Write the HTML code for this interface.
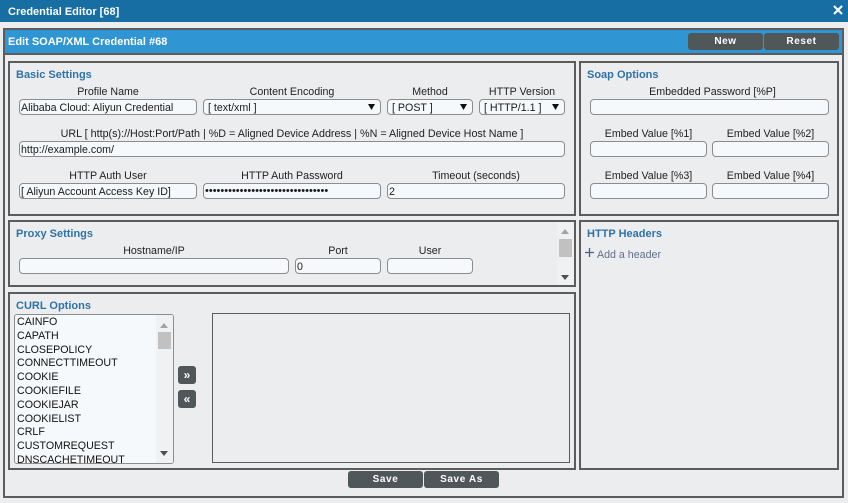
<!DOCTYPE html>
<html><head><meta charset="utf-8"><title>Credential Editor [68]</title>
<style>
html,body{margin:0;padding:0}
body{width:848px;height:503px;overflow:hidden;background:#ecedef;position:relative;font:10.67px/14px "Liberation Sans",sans-serif;color:#222}
div,svg{position:absolute;box-sizing:border-box}
.p{border:2px solid #5c5c5c}
.t{font-weight:bold;font-size:11px;color:#2f72a8;white-space:nowrap;margin-top:1px}
.l{text-align:center;white-space:nowrap;color:#222;margin-top:1px}
.i{background:#f6f9fb;border:1px solid #8c8c8c;border-radius:4px;height:16px;line-height:16px;padding-left:1px;white-space:nowrap;overflow:hidden;color:#1a1a1a}
.b{background:#4f5759;color:#fff;font-weight:bold;font-size:10px;letter-spacing:.6px;text-align:center;border-radius:3px;height:17px;line-height:18px;width:75px}
.o{left:2px;white-space:nowrap;color:#111;height:14px;line-height:14px}
</style></head><body>
<div style="left:0;top:0;width:848px;height:22px;background:#176ea3"></div>
<div style="left:8px;top:5px;color:#fff;font-weight:bold;font-size:11px;line-height:14px;white-space:nowrap">Credential Editor [68]</div>
<svg style="left:833px;top:5px" width="10" height="10" viewBox="0 0 10 10"><path d="M1 1L9 9M9 1L1 9" stroke="#fff" stroke-width="2" fill="none"/></svg>

<div class="p" style="left:3px;top:28px;width:841px;height:470px"></div>
<div style="left:5px;top:30px;width:837px;height:23px;background:#2f95d3"></div>
<div style="left:5px;top:53px;width:837px;height:2px;background:#5c5c5c"></div>
<div style="left:8px;top:35px;color:#fff;font-weight:bold;font-size:11px;white-space:nowrap">Edit SOAP/XML Credential #68</div>
<div class="b" style="left:688px;top:33px">New</div>
<div class="b" style="left:764px;top:33px">Reset</div>

<div class="p" style="left:8px;top:61px;width:568px;height:155px"></div>
<div class="t" style="left:16px;top:67px">Basic Settings</div>
<div class="l" style="left:19px;top:84px;width:178px">Profile Name</div>
<div class="i" style="left:19px;top:99px;width:178px">Alibaba Cloud: Aliyun Credential</div>
<div class="l" style="left:203px;top:84px;width:178px">Content Encoding</div>
<div class="i" style="left:203px;top:99px;width:178px;padding-left:4px">[ text/xml ]</div>
<svg style="left:368px;top:104px" width="8" height="6"><path d="M0 0H7L3.500 6Z" fill="#111"/></svg>
<div class="l" style="left:387px;top:84px;width:86px">Method</div>
<div class="i" style="left:387px;top:99px;width:86px;padding-left:4px">[ POST ]</div>
<svg style="left:460px;top:104px" width="8" height="6"><path d="M0 0H7L3.500 6Z" fill="#111"/></svg>
<div class="l" style="left:479px;top:84px;width:86px">HTTP Version</div>
<div class="i" style="left:479px;top:99px;width:86px;padding-left:4px">[ HTTP/1.1 ]</div>
<svg style="left:552px;top:104px" width="8" height="6"><path d="M0 0H7L3.500 6Z" fill="#111"/></svg>
<div class="l" style="left:19px;top:126px;width:546px;font-size:10.76px">URL [ http(s)://Host:Port/Path | %D = Aligned Device Address | %N = Aligned Device Host Name ]</div>
<div class="i" style="left:19px;top:141px;width:546px">http://example.com/</div>
<div class="l" style="left:19px;top:168px;width:178px">HTTP Auth User</div>
<div class="i" style="left:19px;top:183px;width:178px">[ Aliyun Account Access Key ID]</div>
<div class="l" style="left:203px;top:168px;width:178px">HTTP Auth Password</div>
<div class="i" style="left:203px;top:183px;width:178px;font-size:11px;line-height:14px">••••••••••••••••••••••••••••••••</div>
<div class="l" style="left:387px;top:168px;width:178px">Timeout (seconds)</div>
<div class="i" style="left:387px;top:183px;width:178px">2</div>

<div class="p" style="left:579px;top:61px;width:260px;height:155px"></div>
<div class="t" style="left:587px;top:67px">Soap Options</div>
<div class="l" style="left:590px;top:84px;width:245px">Embedded Password [%P]</div>
<div class="i" style="left:590px;top:99px;width:239px"></div>
<div class="l" style="left:590px;top:126px;width:117px">Embed Value [%1]</div>
<div class="i" style="left:590px;top:141px;width:117px"></div>
<div class="l" style="left:712px;top:126px;width:117px">Embed Value [%2]</div>
<div class="i" style="left:712px;top:141px;width:117px"></div>
<div class="l" style="left:590px;top:168px;width:117px">Embed Value [%3]</div>
<div class="i" style="left:590px;top:183px;width:117px"></div>
<div class="l" style="left:712px;top:168px;width:117px">Embed Value [%4]</div>
<div class="i" style="left:712px;top:183px;width:117px"></div>

<div class="p" style="left:8px;top:220px;width:568px;height:67px"></div>
<div class="t" style="left:16px;top:226px">Proxy Settings</div>
<div class="l" style="left:19px;top:243px;width:270px">Hostname/IP</div>
<div class="i" style="left:19px;top:258px;width:270px"></div>
<div class="l" style="left:295px;top:243px;width:86px">Port</div>
<div class="i" style="left:295px;top:258px;width:86px">0</div>
<div class="l" style="left:387px;top:243px;width:86px">User</div>
<div class="i" style="left:387px;top:258px;width:86px"></div>
<div style="left:557px;top:222px;width:17px;height:63px;background:#f0f1f2"></div>
<div style="left:559px;top:239px;width:13px;height:18px;background:#c1c1c1"></div>
<svg style="left:561px;top:229px" width="8" height="5"><path d="M0 5H8L4 0Z" fill="#a3a3a3"/></svg>
<svg style="left:561px;top:275px" width="8" height="5"><path d="M0 0H8L4 5Z" fill="#505050"/></svg>

<div class="p" style="left:8px;top:292px;width:568px;height:178px"></div>
<div class="t" style="left:16px;top:298px">CURL Options</div>
<div style="left:14px;top:314px;width:160px;height:150px;background:#f6f9fb;border:1px solid #8c8c8c;border-radius:3px;overflow:hidden">
<div class="o" style="top:0">CAINFO</div>
<div class="o" style="top:14px">CAPATH</div>
<div class="o" style="top:28px">CLOSEPOLICY</div>
<div class="o" style="top:41px">CONNECTTIMEOUT</div>
<div class="o" style="top:55px">COOKIE</div>
<div class="o" style="top:69px">COOKIEFILE</div>
<div class="o" style="top:83px">COOKIEJAR</div>
<div class="o" style="top:97px">COOKIELIST</div>
<div class="o" style="top:110px">CRLF</div>
<div class="o" style="top:124px">CUSTOMREQUEST</div>
<div class="o" style="top:138px">DNSCACHETIMEOUT</div>
<div style="left:141px;top:0;width:17px;height:148px;background:#f0f1f2"></div>
<div style="left:143px;top:17px;width:13px;height:17px;background:#c1c1c1"></div>
<svg style="left:145px;top:8px" width="8" height="5"><path d="M0 5H8L4 0Z" fill="#a3a3a3"/></svg>
<svg style="left:145px;top:136px" width="8" height="5"><path d="M0 0H8L4 5Z" fill="#505050"/></svg>
</div>
<div style="left:178px;top:366px;width:18px;height:18px;background:#4f5759;border-radius:3px;color:#fff;font-weight:bold;text-align:center;line-height:18px;font-size:12px">»</div>
<div style="left:178px;top:390px;width:18px;height:18px;background:#4f5759;border-radius:3px;color:#fff;font-weight:bold;text-align:center;line-height:18px;font-size:12px">«</div>
<div style="left:212px;top:313px;width:358px;height:150px;border:1px solid #5c5c5c"></div>

<div class="p" style="left:579px;top:220px;width:260px;height:250px"></div>
<div class="t" style="left:587px;top:226px">HTTP Headers</div>
<svg style="left:585px;top:248px" width="9" height="9"><path d="M4.500 0V9M0 4.500H9" stroke="#3f6390" stroke-width="1.300" fill="none"/></svg>
<div style="left:597px;top:248px;color:#5f6f8a;white-space:nowrap">Add a header</div>

<div class="b" style="left:348px;top:471px">Save</div>
<div class="b" style="left:424px;top:471px">Save As</div>
</body></html>
